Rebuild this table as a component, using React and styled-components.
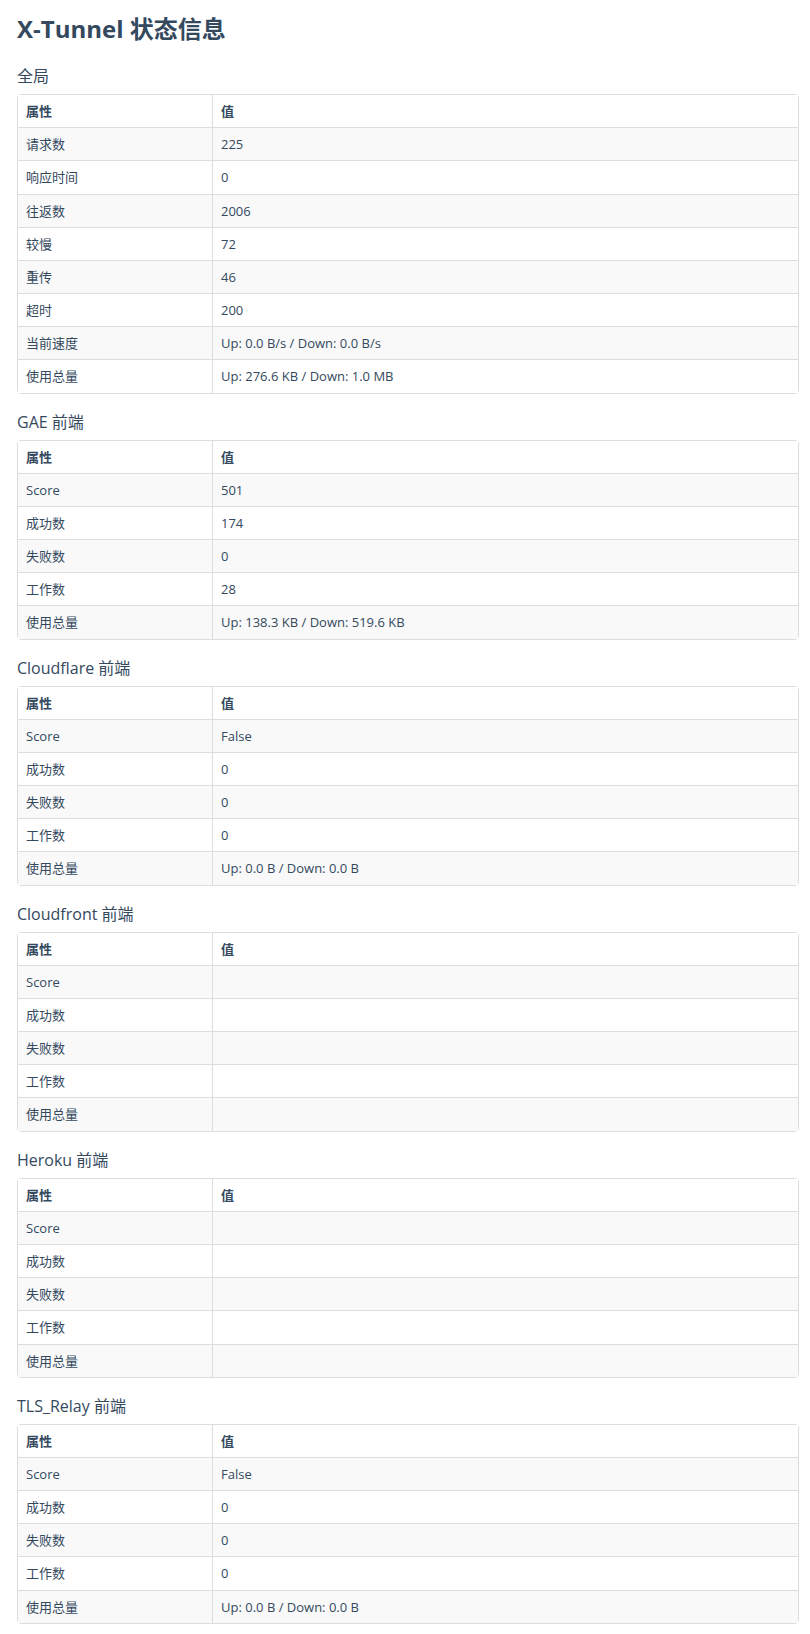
import React from 'react';
import styled, { createGlobalStyle } from 'styled-components';

const GlobalStyle = createGlobalStyle`
  body {
    margin: 0;
    background: #fff;
    color: #34495e;
    font-family: "Open Sans", "Noto Sans CJK SC", sans-serif;
  }
`;

const Page = styled.div`
  display: flex;
  flex-direction: column;
  padding: 14px 11px 9px 17px;
`;

const Title = styled.h1`
  margin: 0 0 4px;
  font-size: 24px;
  line-height: 30px;
  font-weight: 700;
  color: #34495e;
`;

const Section = styled.section`
  display: flex;
  flex-direction: column;
`;

const SectionLabel = styled.h3`
  margin: 17px 0 6px;
  font-size: 16px;
  line-height: 23px;
  font-weight: 400;
  color: #34495e;
`;

const Table = styled.table`
  width: 100%;
  border-collapse: separate;
  border-spacing: 0;
  border: 1px solid #ddd;
  border-radius: 4px;
  font-size: 13px;
  table-layout: fixed;
`;

const Row = styled.tr`
  background: ${(p) => (p.$striped ? '#f9f9f9' : '#fff')};
`;

const Cell = styled.td`
  box-sizing: border-box;
  padding: 7px 8px;
  line-height: 18.17px;
  text-align: left;
  border-top: ${(p) => (p.$first ? 'none' : '1px solid #ddd')};
  border-left: ${(p) => (p.$key ? 'none' : '1px solid #ddd')};
  width: ${(p) => (p.$key ? '194px' : 'auto')};
  font-weight: ${(p) => (p.$head ? 700 : 400)};
  white-space: nowrap;
  overflow: hidden;
`;

const sections = [
  {
    name: '全局',
    rows: [
      ['请求数', '225'],
      ['响应时间', '0'],
      ['往返数', '2006'],
      ['较慢', '72'],
      ['重传', '46'],
      ['超时', '200'],
      ['当前速度', 'Up: 0.0 B/s / Down: 0.0 B/s'],
      ['使用总量', 'Up: 276.6 KB / Down: 1.0 MB'],
    ],
  },
  {
    name: 'GAE 前端',
    rows: [
      ['Score', '501'],
      ['成功数', '174'],
      ['失败数', '0'],
      ['工作数', '28'],
      ['使用总量', 'Up: 138.3 KB / Down: 519.6 KB'],
    ],
  },
  {
    name: 'Cloudflare 前端',
    rows: [
      ['Score', 'False'],
      ['成功数', '0'],
      ['失败数', '0'],
      ['工作数', '0'],
      ['使用总量', 'Up: 0.0 B / Down: 0.0 B'],
    ],
  },
  {
    name: 'Cloudfront 前端',
    rows: [
      ['Score', ''],
      ['成功数', ''],
      ['失败数', ''],
      ['工作数', ''],
      ['使用总量', ''],
    ],
  },
  {
    name: 'Heroku 前端',
    rows: [
      ['Score', ''],
      ['成功数', ''],
      ['失败数', ''],
      ['工作数', ''],
      ['使用总量', ''],
    ],
  },
  {
    name: 'TLS_Relay 前端',
    rows: [
      ['Score', 'False'],
      ['成功数', '0'],
      ['失败数', '0'],
      ['工作数', '0'],
      ['使用总量', 'Up: 0.0 B / Down: 0.0 B'],
    ],
  },
];

const StatusTable = ({ rows }) => (
  <Table>
    <thead>
      <Row>
        <Cell as="th" $key $head $first>属性</Cell>
        <Cell as="th" $head $first>值</Cell>
      </Row>
    </thead>
    <tbody>
      {rows.map(([k, v], i) => (
        <Row key={k} $striped={i % 2 === 0}>
          <Cell $key>{k}</Cell>
          <Cell>{v}</Cell>
        </Row>
      ))}
    </tbody>
  </Table>
);

export default function App() {
  return (
    <>
      <GlobalStyle />
      <Page>
        <Title>X-Tunnel 状态信息</Title>
        {sections.map((s) => (
          <Section key={s.name}>
            <SectionLabel>{s.name}</SectionLabel>
            <StatusTable rows={s.rows} />
          </Section>
        ))}
      </Page>
    </>
  );
}
